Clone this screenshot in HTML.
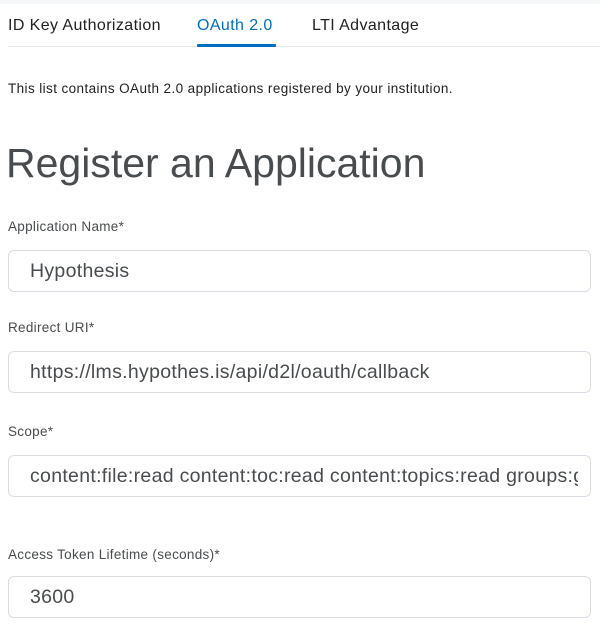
<!DOCTYPE html>
<html><head><style>
body{margin:0;width:600px;height:630px;background:#fff;font-family:"Liberation Sans",sans-serif;color:#494c4e;position:relative;overflow:hidden}
.a{position:absolute;white-space:nowrap}
.tab{font-size:16px;top:17px;color:#202122;letter-spacing:0.4px}
.lbl{font-size:13.5px;left:8px;color:#494c4e;letter-spacing:0.3px}
.inp{position:absolute;left:8px;width:583px;border:1px solid #d9dde3;border-radius:6px;box-sizing:border-box;font-size:19.5px;color:#494c4e;padding-left:21px;line-height:40px;overflow:hidden;white-space:nowrap;height:42px;letter-spacing:0.3px}
</style></head><body>
<div class="a" style="left:0;top:0;width:600px;height:4px;background:#f6f7f8"></div>
<div class="a tab" style="left:8px">ID Key Authorization</div>
<div class="a tab" style="left:197px;color:#006fbf">OAuth 2.0</div>
<div class="a tab" style="left:312px">LTI Advantage</div>
<div class="a" style="left:8px;top:46px;width:592px;height:1px;background:#e3e6ea"></div>
<div class="a" style="left:197px;top:44px;width:79px;height:3px;background:#006fbf;border-radius:1px"></div>
<div class="a" style="left:8px;top:81px;font-size:13.5px;color:#202122;letter-spacing:0.4px">This list contains OAuth 2.0 applications registered by your institution.</div>
<div class="a" style="left:6px;top:140px;font-size:41px;color:#494c4e">Register an Application</div>
<div class="a lbl" style="top:219px">Application Name*</div>
<div class="inp" style="top:250px">Hypothesis</div>
<div class="a lbl" style="top:320px">Redirect URI*</div>
<div class="inp" style="top:351px">https://lms.hypothes.is/api/d2l/oauth/callback</div>
<div class="a lbl" style="top:424px">Scope*</div>
<div class="inp" style="top:455px"><span style="display:inline-block;width:548px;overflow:hidden;vertical-align:top">content:file:read content:toc:read content:topics:read groups:g</span></div>
<div class="a lbl" style="top:547px">Access Token Lifetime (seconds)*</div>
<div class="inp" style="top:576px">3600</div>
</body></html>
